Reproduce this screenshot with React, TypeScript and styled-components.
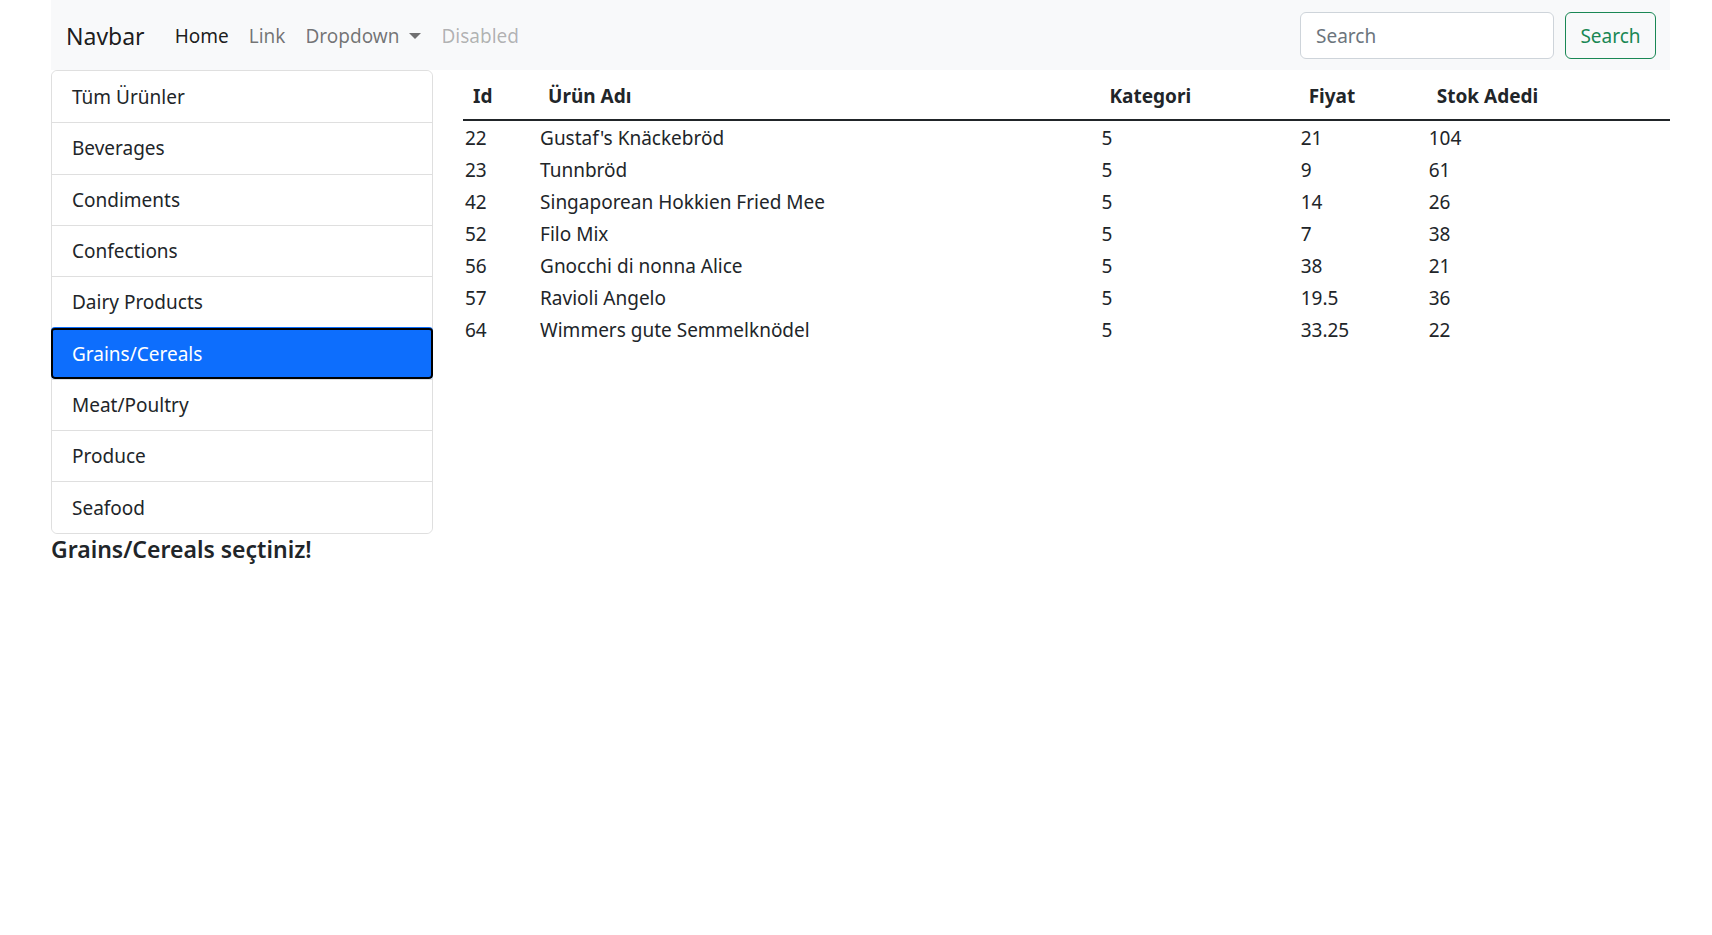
import React, { useState } from 'react';
import styled, { createGlobalStyle } from 'styled-components';

const GlobalStyle = createGlobalStyle`
  body {
    margin: 0;
    font-family: "Noto Sans", "Open Sans", "Liberation Sans", sans-serif;
    font-size: 19px;
    color: #212529;
    background: #fff;
  }
  * { box-sizing: border-box; }
`;

const Page = styled.div`
  width: 1670px;
  padding-left: 51px;
`;

const Navbar = styled.nav`
  height: 70px;
  background: #f8f9fa;
  display: flex;
  align-items: center;
  padding: 0 14px 0 15px;
`;

const Brand = styled.a`
  font-size: 23px;
  color: rgba(0, 0, 0, 0.9);
  margin-right: 20px;
  padding-top: 2px;
  text-decoration: none;
`;

const NavLink = styled.a<{ $state?: 'active' | 'disabled' }>`
  display: flex;
  align-items: center;
  padding: 2px 10px 0;
  text-decoration: none;
  color: ${p =>
    p.$state === 'active' ? 'rgba(0,0,0,0.9)' : p.$state === 'disabled' ? 'rgba(0,0,0,0.3)' : 'rgba(0,0,0,0.55)'};
`;

const Caret = styled.span`
  display: inline-block;
  margin-left: 10px;
  border-top: 6px solid currentColor;
  border-left: 6px solid transparent;
  border-right: 6px solid transparent;
`;

const SearchForm = styled.form`
  margin-left: auto;
  display: flex;
  gap: 11px;
`;

const SearchInput = styled.input`
  width: 254px;
  height: 47px;
  padding: 2px 15px 0;
  border: 1px solid #ced4da;
  border-radius: 6px;
  font: inherit;
  color: #212529;
  background: #fff;
  &::placeholder { color: #6c757d; }
`;

const OutlineButton = styled.button`
  width: 91px;
  height: 47px;
  padding: 2px 0 0;
  border: 1px solid #198754;
  border-radius: 6px;
  background: transparent;
  color: #198754;
  font: inherit;
`;

const Main = styled.div`
  display: flex;
  gap: 30px;
  align-items: flex-start;
`;

const Sidebar = styled.div`
  width: 382px;
  flex-shrink: 0;
`;

const List = styled.div`
  display: flex;
  flex-direction: column;
  border: 1px solid rgba(0, 0, 0, 0.125);
  border-radius: 6px;
`;

const ListItem = styled.button<{ $active?: boolean }>`
  height: 51.3px;
  display: flex;
  align-items: center;
  padding: 0 20px;
  border: none;
  border-top: 1px solid ${p => (p.$active ? 'transparent' : 'rgba(0, 0, 0, 0.125)')};
  background: ${p => (p.$active ? '#0d6efd' : '#fff')};
  color: ${p => (p.$active ? '#fff' : '#212529')};
  font: inherit;
  text-align: left;
  margin: ${p => (p.$active ? '0 -1px' : '0')};
  padding-left: ${p => (p.$active ? '21px' : '20px')};
  border-radius: ${p => (p.$active ? '4px' : '0')};
  box-shadow: ${p => (p.$active ? 'inset 0 0 0 2px #000' : 'none')};
  &:first-child { border-top: none; border-radius: 6px 6px 0 0; }
  &:last-child { border-radius: 0 0 6px 6px; }
`;

const Selected = styled.h5`
  margin: 0;
  font-size: 23px;
  font-weight: 600;
  line-height: 30px;
`;

const Table = styled.table`
  flex: 1;
  border-collapse: collapse;
  table-layout: fixed;
  line-height: 30px;
`;

const Th = styled.th`
  text-align: left;
  font-weight: 700;
  padding: 11px 10px 8px;
  border-bottom: 2px solid #212529;
`;

const Td = styled.td`
  padding: 2px 1px 0 2px;
`;

const categories = [
  'Tüm Ürünler',
  'Beverages',
  'Condiments',
  'Confections',
  'Dairy Products',
  'Grains/Cereals',
  'Meat/Poultry',
  'Produce',
  'Seafood',
];

const products = [
  { id: 22, name: "Gustaf's Knäckebröd", category: 5, price: '21', stock: 104 },
  { id: 23, name: 'Tunnbröd', category: 5, price: '9', stock: 61 },
  { id: 42, name: 'Singaporean Hokkien Fried Mee', category: 5, price: '14', stock: 26 },
  { id: 52, name: 'Filo Mix', category: 5, price: '7', stock: 38 },
  { id: 56, name: 'Gnocchi di nonna Alice', category: 5, price: '38', stock: 21 },
  { id: 57, name: 'Ravioli Angelo', category: 5, price: '19.5', stock: 36 },
  { id: 64, name: 'Wimmers gute Semmelknödel', category: 5, price: '33.25', stock: 22 },
];

const colWidths = [75, 561, 199, 128, 243];

export default function App() {
  const [current, setCurrent] = useState('Grains/Cereals');

  return (
    <Page>
      <GlobalStyle />
      <Navbar>
        <Brand href="#">Navbar</Brand>
        <NavLink href="#" $state="active">Home</NavLink>
        <NavLink href="#">Link</NavLink>
        <NavLink href="#">
          Dropdown
          <Caret />
        </NavLink>
        <NavLink $state="disabled">Disabled</NavLink>
        <SearchForm onSubmit={e => e.preventDefault()}>
          <SearchInput placeholder="Search" />
          <OutlineButton type="submit">Search</OutlineButton>
        </SearchForm>
      </Navbar>
      <Main>
        <Sidebar>
          <List>
            {categories.map(c => (
              <ListItem key={c} $active={c === current} onClick={() => setCurrent(c)}>
                {c}
              </ListItem>
            ))}
          </List>
          <Selected>{current} seçtiniz!</Selected>
        </Sidebar>
        <Table>
          <colgroup>
            {colWidths.map((w, i) => (
              <col key={i} style={{ width: w }} />
            ))}
          </colgroup>
          <thead>
            <tr>
              <Th>Id</Th>
              <Th>Ürün Adı</Th>
              <Th>Kategori</Th>
              <Th>Fiyat</Th>
              <Th>Stok Adedi</Th>
            </tr>
          </thead>
          <tbody>
            {products.map(p => (
              <tr key={p.id}>
                <Td>{p.id}</Td>
                <Td>{p.name}</Td>
                <Td>{p.category}</Td>
                <Td>{p.price}</Td>
                <Td>{p.stock}</Td>
              </tr>
            ))}
          </tbody>
        </Table>
      </Main>
    </Page>
  );
}
